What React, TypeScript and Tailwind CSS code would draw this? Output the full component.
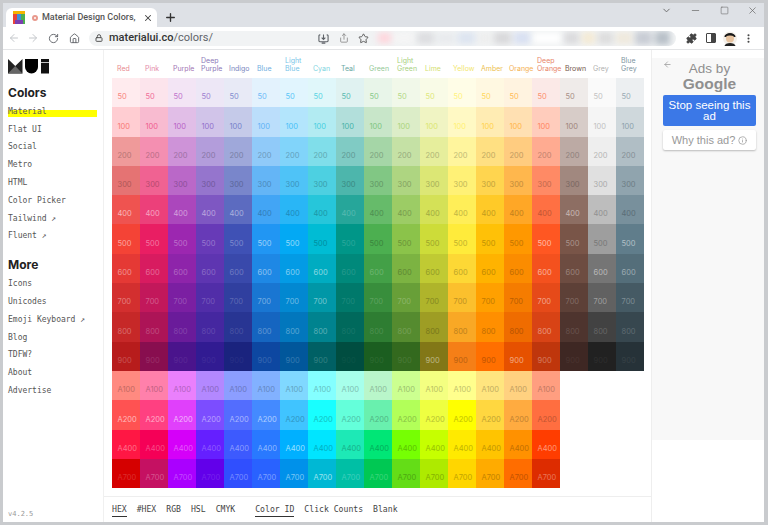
import { ArrowLeft, ArrowRight, RotateCw, Home, Lock, Share, Star, Puzzle, MoreVertical, X, Plus, ChevronDown, Minus, Square, Info } from "lucide-react";

type Col = { name: string[]; head: string; shades: string[]; accents?: string[] };

const SHADES = ["50", "100", "200", "300", "400", "500", "600", "700", "800", "900"];
const ACCENTS = ["A100", "A200", "A400", "A700"];

const COLS: Col[] = [
  { name: ["Red"], head: "#e88a90", shades: ["#ffebee", "#ffcdd2", "#ef9a9a", "#e57373", "#ef5350", "#f44336", "#e53935", "#d32f2f", "#c62828", "#b71c1c"], accents: ["#ff8a80", "#ff5252", "#ff1744", "#d50000"] },
  { name: ["Pink"], head: "#e488a8", shades: ["#fce4ec", "#f8bbd0", "#f48fb1", "#f06292", "#ec407a", "#e91e63", "#d81b60", "#c2185b", "#ad1457", "#880e4f"], accents: ["#ff80ab", "#ff4081", "#f50057", "#c51162"] },
  { name: ["Purple"], head: "#a274b4", shades: ["#f3e5f5", "#e1bee7", "#ce93d8", "#ba68c8", "#ab47bc", "#9c27b0", "#8e24aa", "#7b1fa2", "#6a1b9a", "#4a148c"], accents: ["#ea80fc", "#e040fb", "#d500f9", "#aa00ff"] },
  { name: ["Deep", "Purple"], head: "#8c78b8", shades: ["#ede7f6", "#d1c4e9", "#b39ddb", "#9575cd", "#7e57c2", "#673ab7", "#5e35b1", "#512da8", "#4527a0", "#311b92"], accents: ["#b388ff", "#7c4dff", "#651fff", "#6200ea"] },
  { name: ["Indigo"], head: "#7c88c0", shades: ["#e8eaf6", "#c5cae9", "#9fa8da", "#7986cb", "#5c6bc0", "#3f51b5", "#3949ab", "#303f9f", "#283593", "#1a237e"], accents: ["#8c9eff", "#536dfe", "#3d5afe", "#304ffe"] },
  { name: ["Blue"], head: "#70aee0", shades: ["#e3f2fd", "#bbdefb", "#90caf9", "#64b5f6", "#42a5f5", "#2196f3", "#1e88e5", "#1976d2", "#1565c0", "#0d47a1"], accents: ["#82b1ff", "#448aff", "#2979ff", "#2962ff"] },
  { name: ["Light", "Blue"], head: "#78c4e8", shades: ["#e1f5fe", "#b3e5fc", "#81d4fa", "#4fc3f7", "#29b6f6", "#03a9f4", "#039be5", "#0288d1", "#0277bd", "#01579b"], accents: ["#80d8ff", "#40c4ff", "#00b0ff", "#0091ea"] },
  { name: ["Cyan"], head: "#80d4e0", shades: ["#e0f7fa", "#b2ebf2", "#80deea", "#4dd0e1", "#26c6da", "#00bcd4", "#00acc1", "#0097a7", "#00838f", "#006064"], accents: ["#84ffff", "#18ffff", "#00e5ff", "#00b8d4"] },
  { name: ["Teal"], head: "#6aa8a2", shades: ["#e0f2f1", "#b2dfdb", "#80cbc4", "#4db6ac", "#26a69a", "#009688", "#00897b", "#00796b", "#00695c", "#004d40"], accents: ["#a7ffeb", "#64ffda", "#1de9b6", "#00bfa5"] },
  { name: ["Green"], head: "#94c896", shades: ["#e8f5e9", "#c8e6c9", "#a5d6a7", "#81c784", "#66bb6a", "#4caf50", "#43a047", "#388e3c", "#2e7d32", "#1b5e20"], accents: ["#b9f6ca", "#69f0ae", "#00e676", "#00c853"] },
  { name: ["Light", "Green"], head: "#a8d080", shades: ["#f1f8e9", "#dcedc8", "#c5e1a5", "#aed581", "#9ccc65", "#8bc34a", "#7cb342", "#689f38", "#558b2f", "#33691e"], accents: ["#ccff90", "#b2ff59", "#76ff03", "#64dd17"] },
  { name: ["Lime"], head: "#d4de70", shades: ["#f9fbe7", "#f0f4c3", "#e6ee9c", "#dce775", "#d4e157", "#cddc39", "#c0ca33", "#afb42b", "#9e9d24", "#827717"], accents: ["#f4ff81", "#eeff41", "#c6ff00", "#aeea00"] },
  { name: ["Yellow"], head: "#f2e670", shades: ["#fffde7", "#fff9c4", "#fff59d", "#fff176", "#ffee58", "#ffeb3b", "#fdd835", "#fbc02d", "#f9a825", "#f57f17"], accents: ["#ffff8d", "#ffff00", "#ffea00", "#ffd600"] },
  { name: ["Amber"], head: "#ecc050", shades: ["#fff8e1", "#ffecb3", "#ffe082", "#ffd54f", "#ffca28", "#ffc107", "#ffb300", "#ffa000", "#ff8f00", "#ff6f00"], accents: ["#ffe57f", "#ffd740", "#ffc400", "#ffab00"] },
  { name: ["Orange"], head: "#f4b050", shades: ["#fff3e0", "#ffe0b2", "#ffcc80", "#ffb74d", "#ffa726", "#ff9800", "#fb8c00", "#f57c00", "#ef6c00", "#e65100"], accents: ["#ffd180", "#ffab40", "#ff9100", "#ff6d00"] },
  { name: ["Deep", "Orange"], head: "#e88468", shades: ["#fbe9e7", "#ffccbc", "#ffab91", "#ff8a65", "#ff7043", "#ff5722", "#f4511e", "#e64a19", "#d84315", "#bf360c"], accents: ["#ff9e80", "#ff6e40", "#ff3d00", "#dd2c00"] },
  { name: ["Brown"], head: "#75574c", shades: ["#efebe9", "#d7ccc8", "#bcaaa4", "#a1887f", "#8d6e63", "#795548", "#6d4c41", "#5d4037", "#4e342e", "#3e2723"] },
  { name: ["Grey"], head: "#b0b0b0", shades: ["#fafafa", "#f5f5f5", "#eeeeee", "#e0e0e0", "#bdbdbd", "#9e9e9e", "#757575", "#616161", "#424242", "#212121"] },
  { name: ["Blue", "Grey"], head: "#7e94a0", shades: ["#eceff1", "#cfd8dc", "#b0bec5", "#90a4ae", "#78909c", "#607d8b", "#546e7a", "#455a64", "#37474f", "#263238"] },
];

const rgb = (hex: string) => [1, 3, 5].map((i) => parseInt(hex.slice(i, i + 2), 16));
const lum = (hex: string) => {
  const [r, g, b] = rgb(hex);
  return (0.299 * r + 0.587 * g + 0.114 * b) / 255;
};
const mix = (a: string, b: string, t: number) => {
  const x = rgb(a);
  const y = rgb(b);
  return `rgb(${x.map((v, i) => Math.round(v + (y[i] - v) * t)).join(",")})`;
};

// labels are low contrast in the original, tinted from the swatch itself
function labelColor(bg: string, base: string, pale: boolean) {
  const l = lum(bg);
  if (pale) return mix(base, bg, 0.4);
  if (l > 0.525) return mix(bg, "#000000", 0.24);
  const [r, g, b] = rgb(bg);
  // greens stay quieter than reds and blues of the same lightness
  const damp = g > r && g > b ? 0.4 : 1;
  return mix(bg, "#ffffff", Math.min(0.7, Math.max(0.06, (l - 0.14) * 1.6)) * damp);
}

const COLOR_LINKS = ["Material", "Flat UI", "Social", "Metro", "HTML", "Color Picker", "Tailwind ↗", "Fluent ↗"];
const MORE_LINKS = ["Icons", "Unicodes", "Emoji Keyboard ↗", "Blog", "TDFW?", "About", "Advertise"];

function Logo() {
  return (
    <svg width="42" height="15" viewBox="0 0 42 15" className="block">
      <path d="M0 0 L7.25 7 L14.5 0 V14.5 H0 Z" fill="#222" />
      <path d="M7.25 7 L14.5 14.5 H0 Z" fill="#666" />
      <path d="M17 0 H30 V8 A6.5 6.5 0 0 1 17 8 Z" fill="#000" />
      <path d="M33 0 H41 V3.2 H33 Z M33 4 H41 V14.5 H33 Z" fill="#111" />
    </svg>
  );
}

function Favicon() {
  return (
    <svg width="12" height="13" viewBox="0 0 12 13" className="shrink-0">
      <rect width="4" height="13" fill="#e8443a" />
      <rect x="4" width="4" height="13" fill="#3f8fdc" />
      <rect x="8" width="4" height="13" fill="#4caf50" />
      <rect y="0" width="12" height="3" fill="#f4b400" />
      <rect y="9" x="2" width="8" height="4" fill="#7b3fb0" />
    </svg>
  );
}

function SideLink({ label, active }: { label: string; active?: boolean }) {
  return (
    <div className={active ? "h-[17.8px] flex items-center w-[89px] bg-[linear-gradient(transparent_6.5px,#ffff00_6.5px,#ffff00_14px,transparent_14px)] text-[#555]" : "h-[17.8px] flex items-center text-[#555]"}>
      {label}
    </div>
  );
}

function Swatch({ bg, label, color }: { bg: string; label: string; color: string }) {
  return (
    <div className="w-7 h-full flex items-end pl-[5.5px] pb-[4px] text-[7.5px] leading-[12px]" style={{ backgroundColor: bg, color }}>
      {label}
    </div>
  );
}

export default function App() {
  return (
    <div className="w-[768px] h-[525px] overflow-hidden bg-[#c9cbce] pt-[3px] pl-[3px] pr-[4px] pb-[3px] flex flex-col font-['Inter',sans-serif]">
      {/* tab strip */}
      <div className="h-[24px] shrink-0 bg-[#dee1e6] flex items-end pl-[3px]">
        <div className="w-[151px] h-[19px] bg-white rounded-t-[6px] flex items-center pl-[7px] text-[#555]">
          <Favicon />
          <span className="ml-[7px] w-[6px] h-[6px] rounded-full border-2 border-[#e8998d] shrink-0" />
          <span className="ml-[4px] w-[92px] whitespace-nowrap font-['Roboto',sans-serif] font-medium text-[9px]">Material Design Colors,</span>
          <X size={10} strokeWidth={2.5} className="ml-[9px] text-[#444]" />
        </div>
        <Plus size={13} strokeWidth={2.5} className="ml-[7px] mb-[3px] text-[#333]" />
        <div className="flex-1" />
        <div className="flex items-center gap-[18.5px] self-start mt-[2px] pr-[6px] text-[#666]">
          <ChevronDown size={11} />
          <Minus size={11} strokeWidth={1.5} />
          <Square size={9} strokeWidth={1.5} />
          <X size={11} strokeWidth={1.5} />
        </div>
      </div>

      {/* toolbar */}
      <div className="h-[23px] shrink-0 bg-white border-b border-[#e3e4e6] flex items-center pl-[5px]">
        <ArrowLeft size={12} className="text-[#c4c7cb]" />
        <ArrowRight size={12} className="text-[#c4c7cb] ml-[7px]" />
        <RotateCw size={11} className="text-[#5f6368] ml-[9px]" />
        <Home size={11} className="text-[#5f6368] ml-[10px]" />
        <div className="ml-[9px] w-[587px] h-[15px] rounded-full bg-[#f1f3f4] flex items-center pl-[6px] relative overflow-hidden">
          <Lock size={8} strokeWidth={3} className="text-[#555]" />
          <span className="ml-[6px] font-['Roboto',sans-serif] text-[11px] font-medium text-[#333]">materialui.co</span>
          <span className="font-['Roboto',sans-serif] text-[11px] text-[#5f6368]">/colors/</span>
          <svg width="11" height="11" viewBox="0 0 24 24" fill="none" stroke="#5f6368" strokeWidth="2.4" className="ml-[105px]">
            <path d="M5 4h-1a2 2 0 0 0-2 2v11a2 2 0 0 0 2 2h16a2 2 0 0 0 2-2V6a2 2 0 0 0-2-2h-1M12 3v11M8 10l4 4 4-4M8 22h8" />
          </svg>
          <Share size={10} className="ml-[10px] text-[#888]" />
          <Star size={11} className="ml-[9px] text-[#555]" />
          <div className="ml-[9px] w-[292px] h-[14px] flex items-center gap-[3px] blur-[3px]">
            <div className="w-[14px] h-[10px] bg-[#ffd5dc]" />
            <div className="w-[22px] h-[10px] bg-[#f5f5f5]" />
            <div className="w-[18px] h-[12px] bg-[#dcdde0]" />
            <div className="w-[20px] h-[10px] bg-[#e8eaed]" />
            <div className="w-[18px] h-[12px] bg-[#dce4f0]" />
            <div className="w-[14px] h-[10px] bg-[#eeeeee]" />
            <div className="w-[18px] h-[12px] bg-[#d8d8da]" />
            <div className="w-[18px] h-[12px] bg-[#d8e0f2]" />
            <div className="w-[30px] h-[10px] bg-white" />
            <div className="w-[16px] h-[12px] bg-[#dadadc]" />
            <div className="w-[14px] h-[12px] bg-[#f4ead4]" />
            <div className="w-[16px] h-[12px] bg-[#dcdcdc]" />
            <div className="w-[18px] h-[12px] bg-[#efe9dc]" />
            <div className="w-[18px] h-[14px] bg-[#c8ccd4]" />
            <div className="w-[16px] h-[14px] bg-[#b8c0c8]" />
          </div>
        </div>
        <Puzzle size={11} fill="#444" className="ml-[10px] text-[#444]" />
        <div className="ml-[9px] w-[10px] h-[10px] border-[1.5px] border-[#444] rounded-[1px] flex justify-end">
          <div className="w-[4px] h-full bg-[#444]" />
        </div>
        <svg width="14" height="15" viewBox="0 0 14 15" className="ml-[7px]">
          <circle cx="7" cy="7.5" r="7" fill="#f4f0ea" />
          <path d="M1.5 6 C1.5 1 12.5 1 12.5 6 L11 6 C9 4.5 5 4.5 3 6 Z" fill="#1a1a1a" />
          <ellipse cx="7" cy="7.5" rx="4" ry="4" fill="#e8c4a0" />
          <path d="M2.5 5.5 C3 1 11 1 11.5 5.5 C9 4 5 4 2.5 5.5 Z" fill="#1a1a1a" />
          <path d="M1.5 15 C2 11 12 11 12.5 15 Z" fill="#222" />
        </svg>
        <MoreVertical size={11} strokeWidth={2.5} className="ml-[6px] text-[#444]" />
      </div>

      {/* page */}
      <div className="flex-1 min-h-0 bg-white flex">
        <aside className="w-[101px] shrink-0 border-r border-[#f0f0f0] pl-[5px] pt-[9px] pb-[3px] flex flex-col font-['DejaVu_Sans_Mono',monospace] text-[8px]">
          <Logo />
          <div className="mt-[9px] h-[20px] flex items-center font-['Inter',sans-serif] font-bold text-[12px] text-[#222]">Colors</div>
          {COLOR_LINKS.map((l, i) => (
            <SideLink key={l} label={l} active={i === 0} />
          ))}
          <div className="mt-[10px] h-[20px] flex items-center font-['Inter',sans-serif] font-bold text-[12px] text-[#222]">More</div>
          {MORE_LINKS.map((l) => (
            <SideLink key={l} label={l} />
          ))}
          <div className="mt-auto text-[7px] text-[#999]">v4.2.5</div>
        </aside>

        <main className="flex-1 min-w-0 flex flex-col">
          <div className="flex-1 pl-[8px]">
            <div className="flex h-[28px]">
              {COLS.map((c) => (
                <div key={c.name.join()} className="w-7 shrink-0 flex flex-col justify-end pl-[5px] pb-[5px] text-[7px] leading-[8px] whitespace-nowrap" style={{ color: c.head }}>
                  {c.name.map((n) => (
                    <span key={n}>{n}</span>
                  ))}
                </div>
              ))}
            </div>
            {SHADES.map((s, r) => (
              <div key={s} className="flex h-[29.3px]">
                {COLS.map((c) => (
                  <Swatch key={c.name.join()} bg={c.shades[r]} label={s} color={labelColor(c.shades[r], c.shades[5], r < 2)} />
                ))}
              </div>
            ))}
            {ACCENTS.map((s, r) => (
              <div key={s} className="flex h-[29.3px]">
                {COLS.filter((c) => c.accents).map((c) => (
                  <Swatch key={c.name.join()} bg={c.accents![r]} label={s} color={labelColor(c.accents![r], c.shades[5], false)} />
                ))}
              </div>
            ))}
          </div>
          <div className="h-[26px] shrink-0 border-t border-[#eeeeee] pl-[8px] flex items-center font-['DejaVu_Sans_Mono',monospace] text-[8.15px] text-[#444]">
            <span className="border-b border-[#333] pb-[1px] mt-[1px]">HEX</span>
            <span className="ml-[10px]">#HEX</span>
            <span className="ml-[10px]">RGB</span>
            <span className="ml-[10px]">HSL</span>
            <span className="ml-[10px]">CMYK</span>
            <span className="ml-[20px] border-b border-[#333] pb-[1px] mt-[1px]">Color ID</span>
            <span className="ml-[10px]">Click Counts</span>
            <span className="ml-[10px]">Blank</span>
          </div>
        </main>

        <aside className="w-[113px] shrink-0 border-l border-[#eeeeee] font-['Liberation_Sans',sans-serif]">
          <div className="h-[382px] mt-[8px] bg-[#f8f8f8] pl-[11px] pr-[8px] pt-[2px]">
            <ArrowLeft size={9} className="text-[#999]" />
            <div className="text-center text-[13.5px] leading-[15px] text-[#8f8f8f] -mt-[8px]">Ads by</div>
            <div className="text-center text-[15.5px] leading-[16px] font-bold text-[#8f8f8f]">Google</div>
            <div className="mt-[3px] h-[31px] rounded-[2px] bg-[#3b78e7] text-white text-center text-[11.5px] leading-[11px] flex items-center justify-center px-[4px]">Stop seeing this ad</div>
            <div className="mt-[4px] h-[20px] rounded-[2px] bg-white shadow-[0_1px_2px_rgba(0,0,0,0.25)] text-[#999] text-[11px] flex items-center justify-center gap-[3px]">
              Why this ad?
              <Info size={9} />
            </div>
          </div>
        </aside>
      </div>
    </div>
  );
}
